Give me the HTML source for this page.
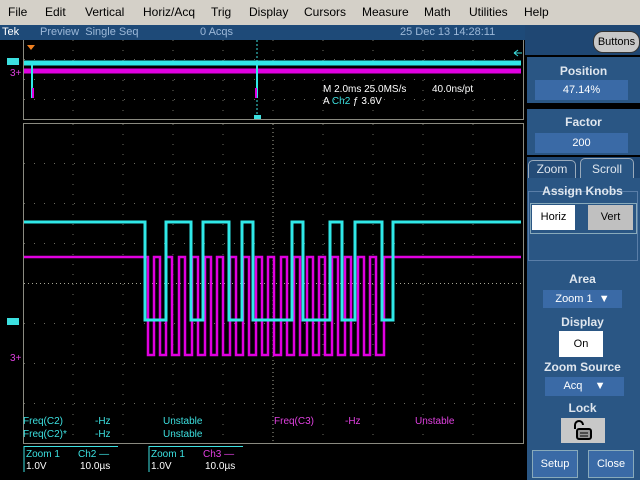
<!DOCTYPE html><html><head><meta charset="utf-8"><style>
body{margin:0;width:640px;height:480px;background:#000;overflow:hidden;position:relative;font-family:"Liberation Sans",sans-serif}
.a{position:absolute;white-space:nowrap}
.menu{left:0;top:0;width:640px;height:25px;background:#d4d0c8}
.menu span{position:absolute;top:5px;font-size:12px;color:#000}
.stat{left:0;top:25px;width:525px;height:15px;background:#1e4a78;color:#9cb8d8;font-size:11px}
.rp{left:525px;top:25px;width:115px;height:455px;background:#1f4773}
.sec{position:absolute;left:2px;width:113px;background:#2a5684}
.lbl{position:absolute;width:100%;text-align:center;color:#dfe6ee;font-weight:bold;font-size:12px}
.box{position:absolute;background:#3a6aa6;color:#fff;font-size:11px;text-align:center}
.btn{position:absolute;font-size:11px;text-align:center;color:#000}
.t{font-size:10px;color:#3ce0e0}
.m{font-size:10px;color:#e040e0}
</style></head><body>
<div class="a menu"><span style="left:8px">File</span><span style="left:45px">Edit</span><span style="left:85px">Vertical</span><span style="left:143px">Horiz/Acq</span><span style="left:211px">Trig</span><span style="left:249px">Display</span><span style="left:304px">Cursors</span><span style="left:362px">Measure</span><span style="left:424px">Math</span><span style="left:469px">Utilities</span><span style="left:524px">Help</span></div>
<div class="a stat"><span class="a" style="left:2px;top:1px;color:#fff">Tek</span><span class="a" style="left:40px;top:1px">Preview&nbsp; Single Seq</span><span class="a" style="left:200px;top:1px">0 Acqs</span><span class="a" style="left:400px;top:1px">25 Dec 13 14:28:11</span></div>
<svg class="a" style="left:0;top:40px" width="525" height="440" viewBox="0 40 525 440">
<g stroke="#8a8a80" fill="none">
<rect x="23.5" y="39.5" width="500" height="80"/>
<rect x="23.5" y="123.5" width="500" height="320"/>
</g>
<g stroke="#6a6a60" stroke-dasharray="1 9">
<path d="M73 40V119M123 40V119M173 40V119M223 40V119M273 40V119M323 40V119M373 40V119M423 40V119M473 40V119M24 59.5H523M24 79.5H523M24 99.5H523"/>
<path d="M73 124V443M123 124V443M173 124V443M223 124V443M323 124V443M373 124V443M423 124V443M473 124V443M24 163.5H523M24 203.5H523M24 243.5H523M24 323.5H523M24 363.5H523M24 403.5H523"/>
</g>
<g stroke="#a8a898" stroke-dasharray="1 3"><path d="M273 124V443M24 283.5H523"/></g>
<path d="M257 40V119" stroke="#3ce0e0" stroke-dasharray="2 2"/>
<rect x="254" y="115" width="7" height="4" fill="#3ce0e0"/>
<path d="M24 71H521" stroke="#e000e0" stroke-width="5"/>
<path d="M24 63H521" stroke="#30e8e8" stroke-width="5"/>
<path d="M32 63V98M257 63V98" stroke="#30e8e8" stroke-width="2"/>
<path d="M33 88V98M256 88V98" stroke="#e000e0" stroke-width="2"/>
<path d="M27 45l4 5 4-5z" fill="#f08020"/>
<path d="M514 53h8M514 53l4-3M514 53l4 3" stroke="#3ce0e0"/>
<path d="M24 257H148V355H154V257H160V355H166V257H172V355H179V257H185V355H192V257H198V355H205V257H211V355H217V257H223V355H230V257H236V355H243V257H249V355H256V257H262V355H268V257H274V355H281V257H287V355H294V257H300V355H307V257H313V355H319V257H325V355H332V257H338V355H345V257H351V355H358V257H364V355H370V257H376V355H384V257H521" stroke="#e000e0" stroke-width="2.5" fill="none"/>
<path d="M24 222H145V320H166V222H191V320H203V222H229V320H242V222H253V320H292V222H303V320H330V222H342V320H355V222H382V320H393V222H521" stroke="#30e8e8" stroke-width="3" fill="none"/>
<text x="323" y="92" font-size="10" fill="#fff" font-family="Liberation Sans">M 2.0ms 25.0MS/s</text>
<text x="432" y="92" font-size="10" fill="#fff" font-family="Liberation Sans">40.0ns/pt</text>
<text x="323" y="104" font-size="10" fill="#fff" font-family="Liberation Sans">A <tspan fill="#3ce0e0">Ch2</tspan> ƒ 3.6V</text>
<rect x="7" y="58" width="12" height="7" fill="#3ce0e0"/><text x="10" y="76" font-size="10" fill="#e040e0">3+</text>
<rect x="7" y="318" width="12" height="7" fill="#3ce0e0"/><text x="10" y="361" font-size="10" fill="#e040e0">3+</text>
<path d="M24 446.5H118M24 446V472M149 446.5H243M149 446V472" stroke="#3ce0e0"/>
</svg>
<div class="a t" style="left:23px;top:416px">Freq(C2)</div><div class="a t" style="left:95px;top:416px">-Hz</div><div class="a t" style="left:163px;top:416px">Unstable</div>
<div class="a t" style="left:23px;top:429px">Freq(C2)*</div><div class="a t" style="left:95px;top:429px">-Hz</div><div class="a t" style="left:163px;top:429px">Unstable</div>
<div class="a m" style="left:274px;top:416px">Freq(C3)</div><div class="a m" style="left:345px;top:416px">-Hz</div><div class="a m" style="left:415px;top:416px">Unstable</div>
<div class="a t" style="left:26px;top:449px">Zoom 1</div><div class="a t" style="left:78px;top:449px">Ch2 —</div>
<div class="a" style="left:26px;top:461px;font-size:10px;color:#fff">1.0V</div><div class="a" style="left:80px;top:461px;font-size:10px;color:#fff">10.0µs</div>
<div class="a t" style="left:151px;top:449px">Zoom 1</div><div class="a m" style="left:203px;top:449px">Ch3 —</div>
<div class="a" style="left:151px;top:461px;font-size:10px;color:#fff">1.0V</div><div class="a" style="left:205px;top:461px;font-size:10px;color:#fff">10.0µs</div>
<div class="a rp">
<div class="a" style="left:0;top:30px;width:115px;height:425px;background:#000"></div>
<div class="btn" style="left:68px;top:6px;width:45px;height:20px;line-height:20px;background:#c8c8c8;border-radius:10px;border:1px solid #333">Buttons</div>
<div class="sec" style="top:32px;height:46px"><div class="lbl" style="top:7px">Position</div><div class="box" style="left:8px;top:23px;width:93px;height:20px;line-height:20px">47.14%</div></div>
<div class="sec" style="top:84px;height:46px"><div class="lbl" style="top:6px">Factor</div><div class="box" style="left:8px;top:24px;width:93px;height:20px;line-height:20px">200</div></div>
<div class="sec" style="top:132px;height:323px;background:#1f4773"></div>
<div class="a" style="left:3px;top:135px;width:46px;height:17px;border:1px solid #9ab;border-radius:5px 5px 0 0;color:#dfe6ee;font-size:12px;text-align:center;line-height:17px;background:#244c78">Zoom</div>
<div class="a" style="left:55px;top:133px;width:52px;height:20px;border:1px solid #9ab;border-bottom:none;border-radius:5px 5px 0 0;color:#dfe6ee;font-size:12px;text-align:center;line-height:20px;background:#2a5684">Scroll</div>
<div class="a" style="left:2px;top:153px;width:113px;height:302px;background:#2a5684"></div>
<div class="a" style="left:3px;top:166px;width:108px;height:68px;border:1px solid #5a7ea8"></div>
<div class="lbl" style="top:159px;left:0;background:transparent">Assign Knobs</div>
<div class="a" style="left:5px;top:178px;width:105px;height:29px;border:1px solid #8ab"></div>
<div class="btn" style="left:7px;top:180px;width:43px;height:25px;line-height:25px;background:#fff">Horiz</div>
<div class="btn" style="left:63px;top:180px;width:45px;height:25px;line-height:25px;background:#c0c0c0">Vert</div>
<div class="lbl" style="top:247px">Area</div>
<div class="box" style="left:18px;top:265px;width:79px;height:18px;line-height:18px">Zoom 1 &nbsp;▼</div>
<div class="lbl" style="top:290px">Display</div>
<div class="btn" style="left:34px;top:306px;width:44px;height:26px;line-height:26px;background:#fff">On</div>
<div class="lbl" style="top:335px">Zoom Source</div>
<div class="box" style="left:20px;top:352px;width:79px;height:19px;line-height:19px">Acq &nbsp;&nbsp;&nbsp;▼</div>
<div class="lbl" style="top:376px">Lock</div>
<div class="btn" style="left:36px;top:393px;width:44px;height:25px;background:#c8c8c8"><svg width="44" height="25"><path d="M14 11V7a4 4 0 0 1 8 0" fill="none" stroke="#000" stroke-width="2"/><rect x="16" y="11" width="14" height="10" rx="2" fill="#999" stroke="#000" stroke-width="2"/><path d="M19 15h8M19 18h8" stroke="#000"/></svg></div>
<div class="box" style="left:7px;top:425px;width:44px;height:26px;line-height:26px;border:1px solid #8ab">Setup</div>
<div class="box" style="left:63px;top:425px;width:44px;height:26px;line-height:26px;border:1px solid #8ab">Close</div>
</div>
</body></html>
